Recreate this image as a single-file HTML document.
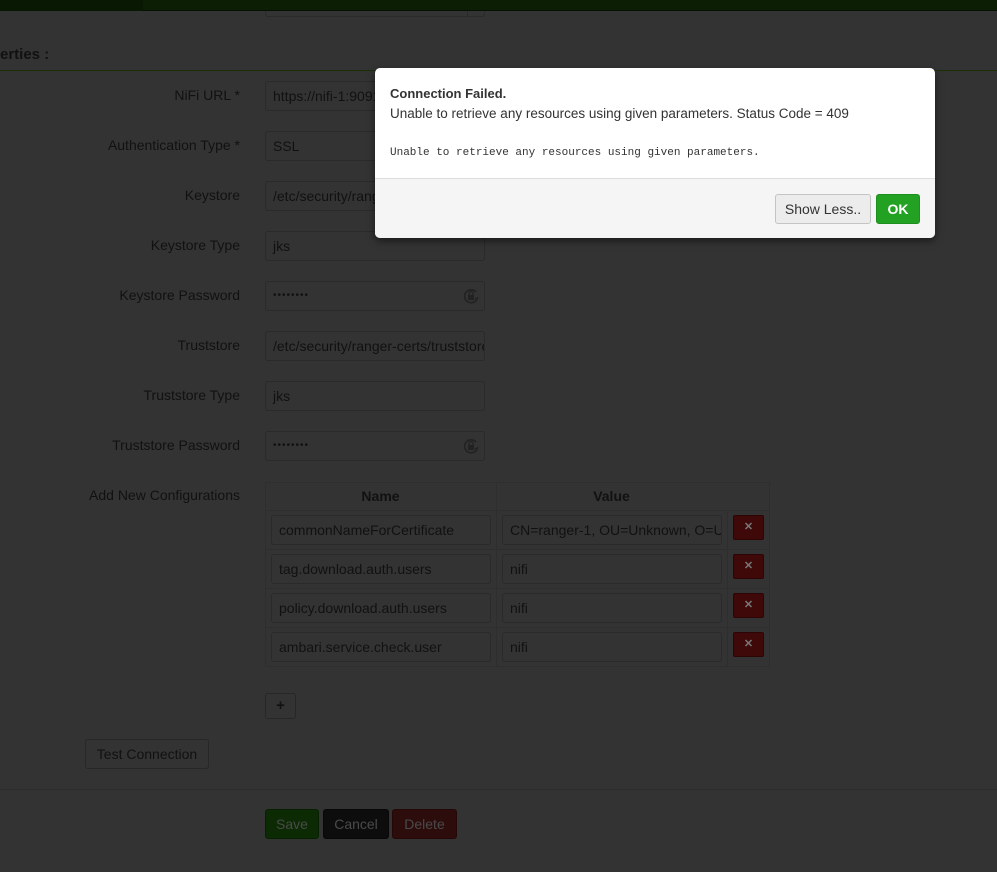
<!DOCTYPE html>
<html><head><meta charset="utf-8">
<style>
*{box-sizing:border-box;margin:0;padding:0}
body{width:997px;height:872px;background:#333;font-family:"Liberation Sans",sans-serif;font-size:14px;color:#111;position:relative;overflow:hidden}
.abs{position:absolute}
.top{left:0;top:0;width:997px;height:11px;background:#0c1f04;border-bottom:1px solid #061002;z-index:5}
.top .seg{left:0;top:0;width:143px;height:11px;background:#081803}
.lbl{position:absolute;right:757px;text-align:right;font-size:14px;color:#111;white-space:nowrap}
.inp{position:absolute;height:30px;border:1px solid #2a2a2a;border-radius:3px;padding:0 7px;line-height:28px;font-size:14px;color:#111;white-space:nowrap;overflow:hidden;background:#333}
.btn{position:absolute;border:1px solid #272727;border-radius:3px;text-align:center;font-size:14px}
.del{position:absolute;left:733px;width:31px;height:25px;background:#3f0909;border:1px solid #2d0505;border-radius:2px;color:#777;text-align:center;line-height:23px;font-size:11px;font-weight:bold}
.modal{left:375px;top:68px;width:560px;height:170px;background:#fff;border-radius:5px;overflow:hidden;box-shadow:0 3px 8px rgba(0,0,0,.5);z-index:10}
.foot{position:absolute;left:0;top:110px;width:560px;height:60px;background:#f5f5f5;border-top:1px solid #ddd}
.lock{position:absolute;left:462px;width:18px;height:18px}
</style></head><body>
<div class="abs top"><div class="abs seg"></div></div>
<div class="inp" style="left:265px;top:-14px;width:220px;height:31px"></div>
<div class="abs" style="left:467px;top:-14px;width:18px;height:31px;border:1px solid #2a2a2a;border-radius:0 3px 3px 0"></div>

<div class="abs" style="left:0;top:46px;font-weight:bold;font-size:15px">erties :</div>
<div class="abs" style="left:0;top:70px;width:997px;height:1px;background:#1c3008"></div>

<div class="lbl" style="top:87px">NiFi URL *</div>
<div class="inp" style="left:265px;top:81px;width:220px">https://nifi-1:9091</div>
<div class="lbl" style="top:137px">Authentication Type *</div>
<div class="inp" style="left:265px;top:131px;width:220px">SSL</div>
<div class="lbl" style="top:187px">Keystore</div>
<div class="inp" style="left:265px;top:181px;width:220px">/etc/security/ranger-certs/keystore</div>
<div class="lbl" style="top:237px">Keystore Type</div>
<div class="inp" style="left:265px;top:231px;width:220px">jks</div>
<div class="lbl" style="top:287px">Keystore Password</div>
<div class="inp" style="left:265px;top:281px;width:220px;font-size:10px;letter-spacing:1px">••••••••</div>
<svg class="lock" style="top:287px" viewBox="0 0 18 18"><path d="M14 5 A6.5 6.5 0 1 0 15 12" fill="none" stroke="#222" stroke-width="1.6"/><path d="M15 12 l-2 -0.5 M15 12 l0.8 -2" stroke="#222" stroke-width="1.4"/><rect x="6" y="8" width="6" height="5" fill="#222"/><path d="M7 8 V6.5 a2 2 0 0 1 4 0 V8" fill="none" stroke="#222" stroke-width="1.2"/></svg>
<div class="lbl" style="top:337px">Truststore</div>
<div class="inp" style="left:265px;top:331px;width:220px">/etc/security/ranger-certs/truststore</div>
<div class="lbl" style="top:387px">Truststore Type</div>
<div class="inp" style="left:265px;top:381px;width:220px">jks</div>
<div class="lbl" style="top:437px">Truststore Password</div>
<div class="inp" style="left:265px;top:431px;width:220px;font-size:10px;letter-spacing:1px">••••••••</div>
<svg class="lock" style="top:437px" viewBox="0 0 18 18"><path d="M14 5 A6.5 6.5 0 1 0 15 12" fill="none" stroke="#222" stroke-width="1.6"/><path d="M15 12 l-2 -0.5 M15 12 l0.8 -2" stroke="#222" stroke-width="1.4"/><rect x="6" y="8" width="6" height="5" fill="#222"/><path d="M7 8 V6.5 a2 2 0 0 1 4 0 V8" fill="none" stroke="#222" stroke-width="1.2"/></svg>

<div class="lbl" style="top:487px">Add New Configurations</div>
<div class="abs" style="left:265px;top:482px;width:505px;height:185px;border:1px solid #2e2e2e"></div>
<div class="abs" style="left:265px;top:510px;width:505px;height:1px;background:#2e2e2e"></div>
<div class="abs" style="left:265px;top:549px;width:505px;height:1px;background:#2e2e2e"></div>
<div class="abs" style="left:265px;top:588px;width:505px;height:1px;background:#2e2e2e"></div>
<div class="abs" style="left:265px;top:627px;width:505px;height:1px;background:#2e2e2e"></div>
<div class="abs" style="left:496px;top:482px;width:1px;height:185px;background:#2e2e2e"></div>
<div class="abs" style="left:727px;top:510px;width:1px;height:157px;background:#2e2e2e"></div>
<div class="abs" style="left:265px;top:488px;width:231px;text-align:center;font-weight:bold">Name</div>
<div class="abs" style="left:496px;top:488px;width:231px;text-align:center;font-weight:bold">Value</div>

<div class="inp" style="left:271px;top:515px;width:220px">commonNameForCertificate</div>
<div class="inp" style="left:502px;top:515px;width:220px">CN=ranger-1, OU=Unknown, O=Unknown</div>
<div class="del" style="top:515px">✕</div>
<div class="inp" style="left:271px;top:554px;width:220px">tag.download.auth.users</div>
<div class="inp" style="left:502px;top:554px;width:220px">nifi</div>
<div class="del" style="top:554px">✕</div>
<div class="inp" style="left:271px;top:593px;width:220px">policy.download.auth.users</div>
<div class="inp" style="left:502px;top:593px;width:220px">nifi</div>
<div class="del" style="top:593px">✕</div>
<div class="inp" style="left:271px;top:632px;width:220px">ambari.service.check.user</div>
<div class="inp" style="left:502px;top:632px;width:220px">nifi</div>
<div class="del" style="top:632px">✕</div>

<div class="btn" style="left:265px;top:693px;width:31px;height:26px;line-height:24px;font-weight:bold;font-size:15px">+</div>
<div class="btn" style="left:85px;top:739px;width:124px;height:30px;line-height:28px">Test Connection</div>
<div class="abs" style="left:0;top:789px;width:997px;height:1px;background:#2d2d2d"></div>

<div class="btn" style="left:265px;top:809px;width:54px;height:30px;line-height:28px;background:#0c2a04;border-color:#082002;color:#4a4a4a">Save</div>
<div class="btn" style="left:323px;top:809px;width:66px;height:30px;line-height:28px;background:#0d0d0d;border-color:#080808;color:#4a4a4a">Cancel</div>
<div class="btn" style="left:392px;top:809px;width:65px;height:30px;line-height:28px;background:#2d0c0c;border-color:#240808;color:#4a4a4a">Delete</div>

<div class="abs modal">
  <div class="abs" style="left:15px;top:18px;font-weight:bold;font-size:13px;color:#333">Connection Failed.</div>
  <div class="abs" style="left:15px;top:38px;font-size:13.5px;color:#333">Unable to retrieve any resources using given parameters. Status Code = 409</div>
  <div class="abs" style="left:15px;top:79px;font-family:'Liberation Mono',monospace;font-size:11px;color:#333">Unable to retrieve any resources using given parameters.</div>
  <div class="foot">
    <div class="btn" style="left:400px;top:15px;width:96px;height:30px;line-height:28px;background:#ececec;border-color:#c4c4c4;color:#333;font-size:14px">Show Less..</div>
    <div class="btn" style="left:501px;top:15px;width:44px;height:30px;line-height:28px;background:#23a123;border-color:#1e8e1e;color:#fff;font-weight:bold;font-size:14px">OK</div>
  </div>
</div>
</body></html>
